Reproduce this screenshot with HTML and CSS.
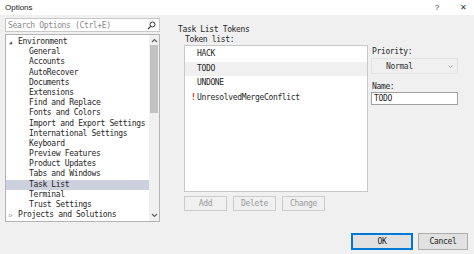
FILE: index.html
```html
<!DOCTYPE html>
<html>
<head>
<meta charset="utf-8">
<link rel="stylesheet" href="styles.css">
</head>
<body>
<div class="window">
  <div class="titlebar">
    <span class="title">Options</span>
    <span class="tb-btn help">?</span>
    <span class="tb-btn close">✕</span>
  </div>
  <div class="body">
    <div class="main">
      <div class="left">
        <div class="search">
          <span class="search-text">Search Options (Ctrl+E)</span>
          <svg class="search-icon" width="9" height="9" viewBox="0 0 9 9"><circle cx="5.5" cy="3.5" r="2.5" fill="none" stroke="#333" stroke-width="1"/><line x1="3.7" y1="5.3" x2="1" y2="8" stroke="#333" stroke-width="1.2"/></svg>
        </div>
        <div class="tree">
          <div class="tree-items">
            <div class="node"><span class="exp">◢</span>Environment</div>
            <div class="child">General</div>
            <div class="child">Accounts</div>
            <div class="child">AutoRecover</div>
            <div class="child">Documents</div>
            <div class="child">Extensions</div>
            <div class="child">Find and Replace</div>
            <div class="child">Fonts and Colors</div>
            <div class="child">Import and Export Settings</div>
            <div class="child">International Settings</div>
            <div class="child">Keyboard</div>
            <div class="child">Preview Features</div>
            <div class="child">Product Updates</div>
            <div class="child">Tabs and Windows</div>
            <div class="child selected">Task List</div>
            <div class="child">Terminal</div>
            <div class="child">Trust Settings</div>
            <div class="node"><span class="exp col">▷</span>Projects and Solutions</div>
          </div>
          <div class="scrollbar">
            <svg class="arrow" width="7" height="5" viewBox="0 0 7 5"><path d="M1 4 L3.5 1.5 L6 4" fill="none" stroke="#606060" stroke-width="1.2"/></svg>
            <div class="track"><div class="thumb"></div></div>
            <svg class="arrow" width="7" height="5" viewBox="0 0 7 5"><path d="M1 1 L3.5 3.5 L6 1" fill="none" stroke="#606060" stroke-width="1.2"/></svg>
          </div>
        </div>
      </div>
      <div class="right">
        <div class="page-title">Task List Tokens</div>
        <div class="panel">
          <div class="token-col">
            <div class="label">Token list:</div>
            <div class="listbox">
              <div class="row">HACK</div>
              <div class="row sel">TODO</div>
              <div class="row">UNDONE</div>
              <div class="row"><span class="bang">!</span>UnresolvedMergeConflict</div>
            </div>
            <div class="btnrow">
              <button class="btn dis">Add</button>
              <button class="btn dis">Delete</button>
              <button class="btn dis">Change</button>
            </div>
          </div>
          <div class="side-col">
            <div class="label plabel">Priority:</div>
            <div class="combo"><span>Normal</span><svg width="5" height="3" viewBox="0 0 5 3"><path d="M0.5 0.5 L2.5 2.5 L4.5 0.5" fill="none" stroke="#b0b0b0" stroke-width="1"/></svg></div>
            <div class="label nlabel">Name:</div>
            <div class="input">TODO</div>
          </div>
        </div>
      </div>
    </div>
    <div class="footer">
      <button class="btn ok">OK</button>
      <button class="btn cancel">Cancel</button>
    </div>
  </div>
</div>
</body>
</html>
```
FILE: styles.css
```css
html, body {
  margin: 0;
  padding: 0;
}
body {
  width: 474px;
  height: 254px;
  overflow: hidden;
  font-family: "DejaVu Sans Mono", "Liberation Mono", monospace;
  font-size: 8px;
  letter-spacing: -0.35px;
  color: #262626;
}
.window {
  width: 474px;
  height: 254px;
  display: flex;
  flex-direction: column;
  background: #f0f0f0;
}
.titlebar {
  height: 15px;
  background: #ffffff;
  display: flex;
  align-items: center;
  font-family: "Liberation Sans", sans-serif;
  letter-spacing: 0;
  font-size: 8px;
}
.title {
  margin-left: 5px;
  flex: 1;
  color: #222;
}
.tb-btn {
  text-align: center;
  color: #333;
}
.help { width: 30px; font-size: 8px; }
.close { width: 22px; font-size: 8px; }
.body {
  flex: 1;
  display: flex;
  flex-direction: column;
}
.main {
  flex: 1;
  display: flex;
  padding: 3px 0 0 5px;
}
.left {
  width: 155px;
  display: flex;
  flex-direction: column;
  gap: 2px;
}
.search {
  height: 14px;
  background: #fff;
  border: 1px solid #c8c8c8;
  box-sizing: border-box;
  display: flex;
  align-items: center;
  padding: 0 3px 0 2px;
}
.search-text {
  flex: 1;
  color: #8a8a8a;
}
.tree {
  height: 188px;
  background: #fff;
  border: 1px solid #b4b4b4;
  box-sizing: border-box;
  display: flex;
}
.tree-items {
  flex: 1;
  padding-top: 2px;
}
.node, .child {
  height: 10.2px;
  line-height: 10.2px;
  white-space: nowrap;
}
.node {
  padding-left: 3px;
}
.exp {
  display: inline-block;
  width: 9px;
  font-size: 5px;
  color: #444;
  vertical-align: top;
  letter-spacing: 0;
}
.exp.col { font-size: 6px; color: #666; }
.child {
  padding-left: 23px;
}
.selected {
  background: #cdd0dd;
}
.scrollbar {
  width: 10px;
  background: #f0f0f0;
  display: flex;
  flex-direction: column;
  align-items: center;
  padding: 3px 0;
  box-sizing: border-box;
}
.arrow {
  flex: none;
  margin: 0 0 2px;
}
.scrollbar .arrow:last-child { margin: 2px 0 0; }
.track {
  flex: 1;
  width: 8px;
}
.thumb {
  height: 68px;
  background: #c2c2c2;
}
.right {
  flex: 1;
  display: flex;
  flex-direction: column;
  padding-left: 17px;
}
.page-title {
  height: 11px;
  line-height: 11px;
  margin-top: 6px;
  margin-left: 1px;
}
.panel {
  display: flex;
  padding-left: 7px;
  gap: 3px;
}
.label {
  height: 9px;
  line-height: 9px;
  padding-left: 1px;
}
.token-col {
  width: 184px;
  display: flex;
  flex-direction: column;
}
.listbox {
  height: 147px;
  background: #fff;
  border: 1px solid #c8c8c8;
  box-sizing: border-box;
  margin-top: 1px;
  padding-top: 1px;
}
.row {
  height: 14.6px;
  line-height: 14.6px;
  padding-left: 12px;
  white-space: nowrap;
}
.row.sel {
  background: #f0f0f0;
}
.bang {
  color: #e01818;
  font-weight: bold;
  margin-left: -6px;
  margin-right: 1px;
  display: inline-block;
  width: 5px;
}
.btnrow {
  display: flex;
  gap: 6px;
  margin-top: 4px;
}
.btn {
  font-family: inherit;
  font-size: 8px;
  letter-spacing: -0.35px;
  height: 15px;
  padding: 0;
  margin: 0;
  box-sizing: border-box;
  background: #e6e6e6;
  border: 1px solid #bcbcbc;
  color: #222;
}
.btn.dis {
  width: 43px;
  background: #f0f0f0;
  border-color: #cccccc;
  color: #9a9a9a;
}
.side-col {
  width: 87px;
  display: flex;
  flex-direction: column;
}
.plabel {
  margin-top: 12px;
}
.combo {
  height: 16px;
  margin-top: 2px;
  background: #f0f0f0;
  border: 1px solid #e2e2e2;
  box-sizing: border-box;
  display: flex;
  align-items: center;
  justify-content: space-between;
  padding: 0 4px 0 14px;
  color: #333;
}
.nlabel {
  margin-top: 8px;
}
.input {
  height: 13px;
  line-height: 11px;
  margin-top: 1px;
  background: #fff;
  border: 1px solid #a0a0a0;
  box-sizing: border-box;
  padding-left: 2px;
}
.footer {
  height: 29px;
  box-sizing: border-box;
  padding-top: 8px;
  display: flex;
  justify-content: flex-end;
  align-items: flex-start;
  gap: 5px;
  padding-right: 6px;
}
.btn.ok {
  width: 62px;
  height: 17px;
  border: 1px solid #0078d7;
  box-shadow: inset 0 0 0 1px #0078d7;
  background: #e1e1e1;
}
.btn.cancel {
  width: 50px;
  height: 17px;
  background: #e1e1e1;
  border-color: #adadad;
}
```
